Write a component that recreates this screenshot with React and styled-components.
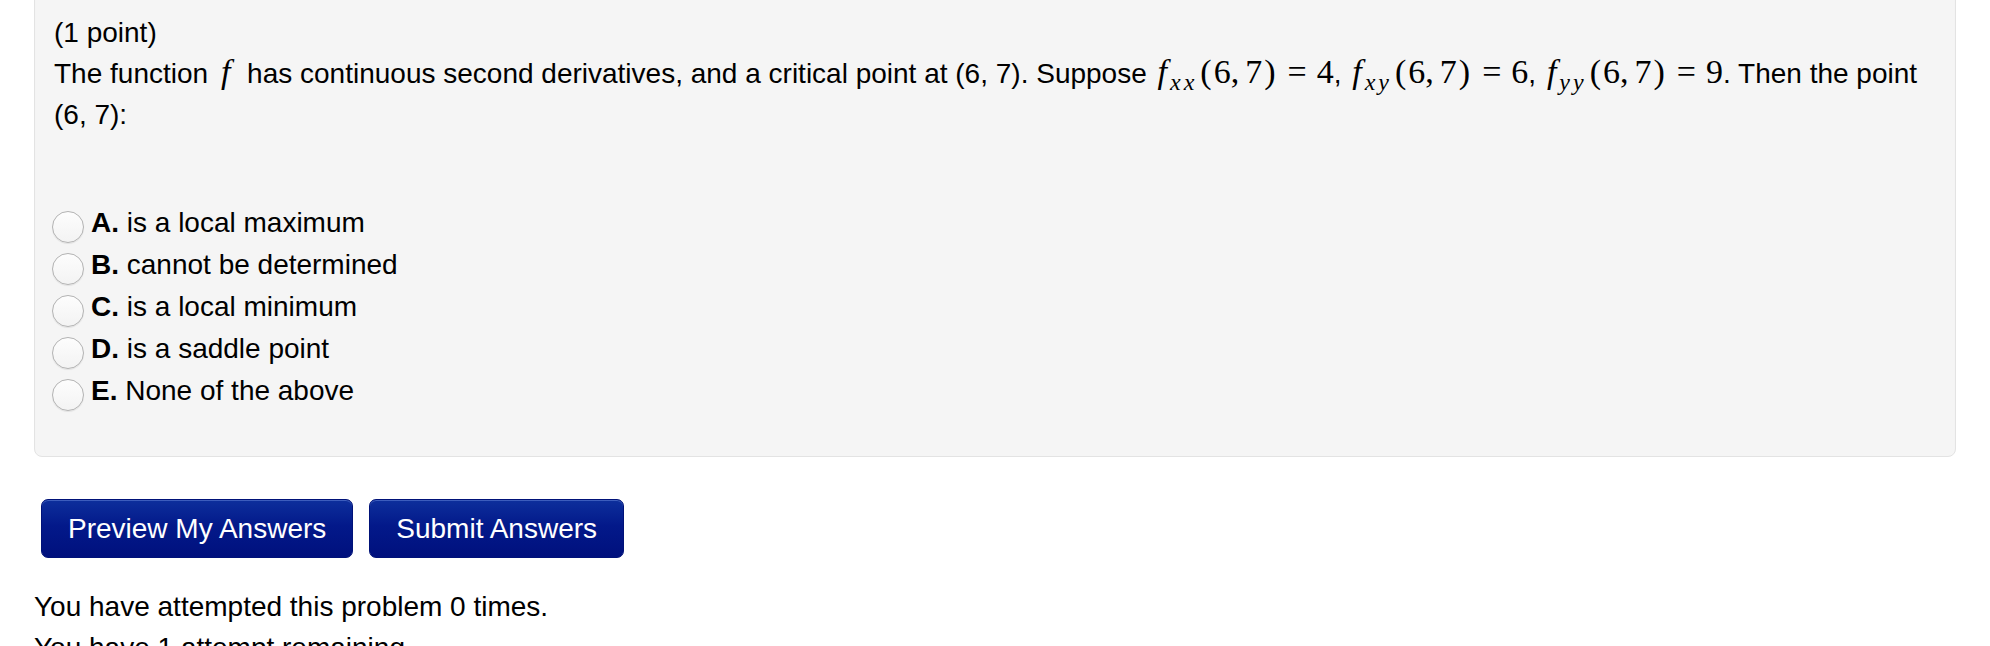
import React from 'react';
import styled, { createGlobalStyle } from 'styled-components';

const GlobalStyle = createGlobalStyle`
  html, body {
    margin: 0;
    padding: 0;
    background: #fff;
  }
  body {
    font-family: "Liberation Sans", Arial, Helvetica, sans-serif;
    font-size: 28px;
    line-height: 41px;
    color: #000;
  }
`;

const Page = styled.div`
  padding: 0 34px;
`;

// the page is scrolled a little, so the top edge of the well is out of view
const Well = styled.div`
  margin-top: -8px;
  padding: 19px 19px 45px;
  background: #f5f5f5;
  border: 1px solid #e3e3e3;
  border-radius: 8px;
  box-shadow: inset 0 1px 1px rgba(0, 0, 0, 0.05);
`;

const Line = styled.div`
  line-height: 41px;
`;

const Math = styled.span`
  font-family: "Liberation Serif", "DejaVu Serif", serif;
  font-size: 34px;
  line-height: 1;
  white-space: nowrap;
`;

const Var = styled.i`
  font-style: italic;
  padding: 0 ${(p) => (p.$alone ? '9px' : '3px')} 0 ${(p) => (p.$alone ? '5px' : '3px')};
`;

const Sub = styled.sub`
  font-size: 24px;
  font-style: italic;
  letter-spacing: 3px;
  line-height: 0;
  vertical-align: -7px;
  margin-right: 1px;
`;

const Paren = styled.span`
  margin: 0 2px;
`;

const Comma = styled.span`
  margin-right: 6px;
`;

const Rel = styled.span`
  margin: 0 10px;
`;

const Options = styled.div`
  margin-top: 66px;
`;

const Option = styled.label`
  display: flex;
  align-items: center;
  height: 42px;
  gap: 7px;
`;

const Radio = styled.span`
  flex: none;
  width: 30px;
  height: 30px;
  margin: 10px 0 0 -2px;
  border-radius: 50%;
  border: 1px solid #b3b3b3;
  background: linear-gradient(#fdfdfd, #f3f3f3);
  box-shadow: 0 1px 1px rgba(0, 0, 0, 0.08);
`;

const Letter = styled.b`
  font-weight: 700;
`;

const Actions = styled.div`
  display: flex;
  gap: 16px;
  margin-top: 42px;
  padding-left: 7px;
`;

const Button = styled.button`
  height: 59px;
  padding: 0 26px;
  font-family: inherit;
  font-size: 28px;
  line-height: 57px;
  color: #fff;
  border: 1px solid #001278;
  border-radius: 7px;
  background: linear-gradient(#0d2f9c, #03198a 45%, #00107d);
  box-shadow: inset 0 1px 0 rgba(120, 150, 230, 0.45);
  cursor: pointer;
`;

const Status = styled.div`
  margin-top: 28px;
`;

const choices = [
  ['A.', 'is a local maximum'],
  ['B.', 'cannot be determined'],
  ['C.', 'is a local minimum'],
  ['D.', 'is a saddle point'],
  ['E.', 'None of the above'],
];

const Deriv = ({ sub, value }) => (
  <Math>
    <Var>f</Var>
    <Sub>{sub}</Sub>
    <Paren>(</Paren>6<Comma>,</Comma>7<Paren>)</Paren>
    <Rel>=</Rel>
    {value}
  </Math>
);

export default function App() {
  return (
    <>
      <GlobalStyle />
      <Page>
        <Well>
          <Line>(1 point)</Line>
          <Line>
            The function <Math><Var $alone>f</Var></Math> has continuous second derivatives, and a
            critical point at (6, 7). Suppose <Deriv sub="xx" value="4" />,{' '}
            <Deriv sub="xy" value="6" />, <Deriv sub="yy" value="9" />. Then the point
            <br />
            (6, 7):
          </Line>
          <Options>
            {choices.map(([letter, text]) => (
              <Option key={letter}>
                <Radio />
                <span>
                  <Letter>{letter}</Letter> {text}
                </span>
              </Option>
            ))}
          </Options>
        </Well>
        <Actions>
          <Button>Preview My Answers</Button>
          <Button>Submit Answers</Button>
        </Actions>
        <Status>
          You have attempted this problem 0 times.
          <br />
          You have 1 attempt remaining.
        </Status>
      </Page>
    </>
  );
}
